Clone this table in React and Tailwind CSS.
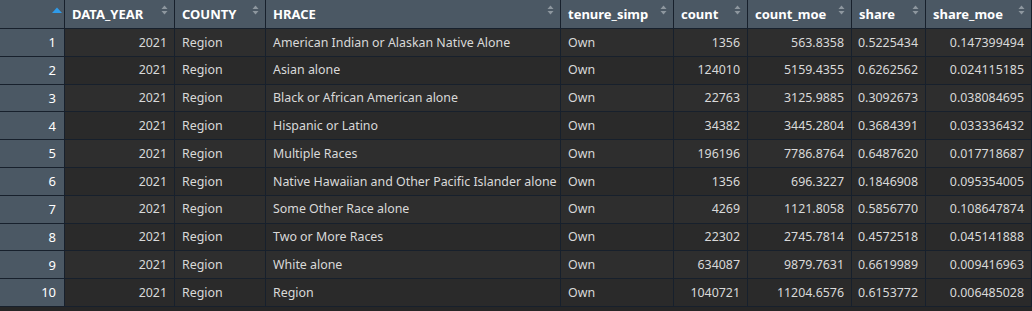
import React from "react";

const cols = [
  { key: "DATA_YEAR", w: "w-[110px]", align: "right" },
  { key: "COUNTY", w: "w-[91px]", align: "left" },
  { key: "HRACE", w: "w-[295px]", align: "left" },
  { key: "tenure_simp", w: "w-[113px]", align: "left" },
  { key: "count", w: "w-[74px]", align: "right" },
  { key: "count_moe", w: "w-[104px]", align: "right" },
  { key: "share", w: "w-[74px]", align: "right" },
  { key: "share_moe", w: "w-[106px]", align: "right" },
];

const rows = [
  ["2021", "Region", "American Indian or Alaskan Native Alone", "Own", "1356", "563.8358", "0.5225434", "0.147399494"],
  ["2021", "Region", "Asian alone", "Own", "124010", "5159.4355", "0.6262562", "0.024115185"],
  ["2021", "Region", "Black or African American alone", "Own", "22763", "3125.9885", "0.3092673", "0.038084695"],
  ["2021", "Region", "Hispanic or Latino", "Own", "34382", "3445.2804", "0.3684391", "0.033336432"],
  ["2021", "Region", "Multiple Races", "Own", "196196", "7786.8764", "0.6487620", "0.017718687"],
  ["2021", "Region", "Native Hawaiian and Other Pacific Islander alone", "Own", "1356", "696.3227", "0.1846908", "0.095354005"],
  ["2021", "Region", "Some Other Race alone", "Own", "4269", "1121.8058", "0.5856770", "0.108647874"],
  ["2021", "Region", "Two or More Races", "Own", "22302", "2745.7814", "0.4572518", "0.045141888"],
  ["2021", "Region", "White alone", "Own", "634087", "9879.7631", "0.6619989", "0.009416963"],
  ["2021", "Region", "Region", "Own", "1040721", "11204.6576", "0.6153772", "0.006485028"],
];

function SortIcon() {
  return (
    <svg width="7" height="10" viewBox="0 0 7 10" className="absolute right-[6px] top-[5px]">
      <path d="M3.5 0.5 L6.5 4 L0.5 4 Z" fill="#8e979f" />
      <path d="M0.5 6 L6.5 6 L3.5 9.5 Z" fill="#8e979f" />
    </svg>
  );
}

export default function App() {
  const font = { fontFamily: '"Segoe UI", "Noto Sans", "Open Sans", sans-serif' };
  return (
    <div className="w-[1032px] h-[311px] bg-[#262626] overflow-hidden" style={font}>
      <div className="flex h-[29px] border-b border-[#17202c] bg-[#4b5864]">
        <div className="relative w-[65px] shrink-0 border-r border-[#17202c]">
          <svg width="10" height="6" viewBox="0 0 10 6" className="absolute left-[52px] top-[7px]">
            <path d="M0 6 L5 0.5 L10 6 Z" fill="#2f9bea" />
          </svg>
        </div>
        {cols.map((c) => (
          <div
            key={c.key}
            className={`relative ${c.w} shrink-0 border-r border-[#17202c] px-[7px] pt-[5px] text-[13px] font-bold text-white leading-[18px]`}
          >
            {c.key}
            <SortIcon />
          </div>
        ))}
      </div>
      {rows.map((r, i) => (
        <div
          key={i}
          className={`flex h-[27.8px] border-b border-[#17202c] ${i % 2 === 0 ? "bg-[#2e2e2e]" : "bg-[#2a2a2a]"}`}
        >
          <div className="w-[65px] shrink-0 border-r border-[#17202c] bg-[#4b5864] pr-[8px] pt-[1px] flex items-center justify-end text-[13px] text-white">
            {i + 1}
          </div>
          {cols.map((c, j) => (
            <div
              key={c.key}
              className={`${c.w} shrink-0 border-r border-[#17202c] px-[7px] pt-[1px] flex items-center text-[12.4px] text-[#d9d9d9] whitespace-nowrap overflow-hidden ${
                c.align === "right" ? "justify-end" : "justify-start"
              }`}
            >
              {r[j]}
            </div>
          ))}
        </div>
      ))}
    </div>
  );
}
